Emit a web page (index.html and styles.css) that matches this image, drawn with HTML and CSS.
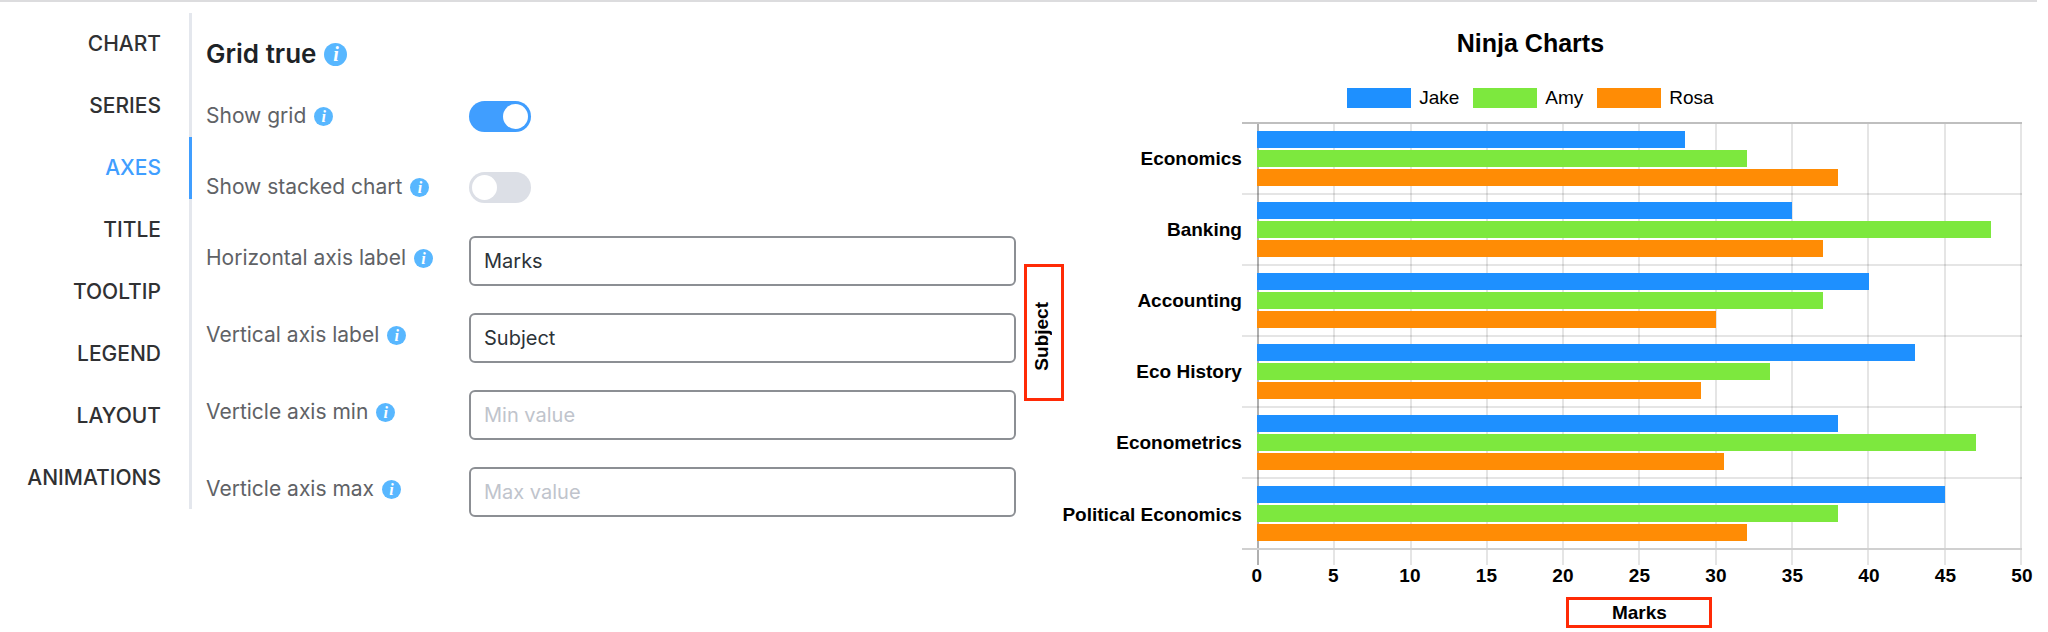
FILE: index.html
```html
<!DOCTYPE html>
<html lang="en">
<head>
    <meta charset="UTF-8">
    <meta name="viewport" content="width=device-width, initial-scale=1.0">
    <title>Ninja Charts</title>
    <link rel="stylesheet" href="styles.css">
</head>
<body>
    <main class="page">
        <nav class="tabs">
            <a href="#chart" class="tab">CHART</a>
            <a href="#series" class="tab">SERIES</a>
            <a href="#axes" class="tab active">AXES</a>
            <a href="#title" class="tab">TITLE</a>
            <a href="#tooltip" class="tab">TOOLTIP</a>
            <a href="#legend" class="tab">LEGEND</a>
            <a href="#layout" class="tab">LAYOUT</a>
            <a href="#animations" class="tab">ANIMATIONS</a>
        </nav>

        <form class="settings">
            <h2 class="settings-title">Grid true <span class="info info-large">i</span></h2>

            <div class="row">
                <label class="row-label" for="show-grid">Show grid <span class="info">i</span></label>
                <input class="switch" type="checkbox" id="show-grid" checked>
            </div>
            <div class="row">
                <label class="row-label" for="show-stacked">Show stacked chart <span class="info">i</span></label>
                <input class="switch" type="checkbox" id="show-stacked">
            </div>
            <div class="row">
                <label class="row-label" for="x-label">Horizontal axis label <span class="info">i</span></label>
                <input class="field" type="text" id="x-label" value="Marks">
            </div>
            <div class="row">
                <label class="row-label" for="y-label">Vertical axis label <span class="info">i</span></label>
                <input class="field" type="text" id="y-label" value="Subject">
            </div>
            <div class="row">
                <label class="row-label" for="y-min">Verticle axis min <span class="info">i</span></label>
                <input class="field" type="text" id="y-min" placeholder="Min value">
            </div>
            <div class="row">
                <label class="row-label" for="y-max">Verticle axis max <span class="info">i</span></label>
                <input class="field" type="text" id="y-max" placeholder="Max value">
            </div>
        </form>

        <section class="chart">
            <h3 class="chart-title">Ninja Charts</h3>
            <div class="legend">
                <span class="legend-item"><span class="swatch blue"></span>Jake</span>
                <span class="legend-item"><span class="swatch green"></span>Amy</span>
                <span class="legend-item"><span class="swatch orange"></span>Rosa</span>
            </div>

            <div class="chart-body">
                <div class="y-title"><span class="y-title-text">Subject</span></div>
                <div class="plot">
                    <div class="grid-lines">
                        <span></span><span></span><span></span><span></span><span></span>
                        <span></span><span></span><span></span><span></span><span></span>
                    </div>
                    <div class="group">
                        <span class="category">Economics</span>
                        <div class="bars">
                            <div class="bar blue" style="width: 56%"></div>
                            <div class="bar green" style="width: 64%"></div>
                            <div class="bar orange" style="width: 76%"></div>
                        </div>
                    </div>
                    <div class="group">
                        <span class="category">Banking</span>
                        <div class="bars">
                            <div class="bar blue" style="width: 70%"></div>
                            <div class="bar green" style="width: 96%"></div>
                            <div class="bar orange" style="width: 74%"></div>
                        </div>
                    </div>
                    <div class="group">
                        <span class="category">Accounting</span>
                        <div class="bars">
                            <div class="bar blue" style="width: 80%"></div>
                            <div class="bar green" style="width: 74%"></div>
                            <div class="bar orange" style="width: 60%"></div>
                        </div>
                    </div>
                    <div class="group">
                        <span class="category">Eco History</span>
                        <div class="bars">
                            <div class="bar blue" style="width: 86%"></div>
                            <div class="bar green" style="width: 67%"></div>
                            <div class="bar orange" style="width: 58%"></div>
                        </div>
                    </div>
                    <div class="group">
                        <span class="category">Econometrics</span>
                        <div class="bars">
                            <div class="bar blue" style="width: 76%"></div>
                            <div class="bar green" style="width: 94%"></div>
                            <div class="bar orange" style="width: 61%"></div>
                        </div>
                    </div>
                    <div class="group">
                        <span class="category">Political Economics</span>
                        <div class="bars">
                            <div class="bar blue" style="width: 90%"></div>
                            <div class="bar green" style="width: 76%"></div>
                            <div class="bar orange" style="width: 64%"></div>
                        </div>
                    </div>
                </div>
            </div>

            <div class="x-axis">
                <div class="ticks">
                    <span>0</span><span>5</span><span>10</span><span>15</span><span>20</span><span>25</span>
                    <span>30</span><span>35</span><span>40</span><span>45</span><span>50</span>
                </div>
                <div class="x-title">Marks</div>
            </div>
        </section>
    </main>
</body>
</html>
```
FILE: styles.css
```css
* {
    box-sizing: border-box;
}
body {
    margin: 0;
    background-color: #fff;
    font-family: Inter, "Liberation Sans", sans-serif;
    font-size: 21px;
    color: #2c3338;
}
.page {
    display: grid;
    grid-template-columns: 192px minmax(0, 4fr) minmax(0, 5fr);
    align-items: start;
}
.page::before {
    content: "";
    grid-column: 1 / -1;
    height: 2px;
    margin-right: 11px;
    background-color: #dcdcde;
}

/* Tabs */
.tabs {
    display: flex;
    flex-direction: column;
    margin-top: 11px;
}
.tab {
    height: 62px;
    padding-right: 28px;
    border-right: 3px solid #e4e7ed;
    line-height: 62px;
    text-align: right;
    text-decoration: none;
    font-weight: 500;
    color: #303133;
}
.tab.active {
    color: #409eff;
    border-right-color: #409eff;
}

/* Settings form */
.settings {
    padding: 27px 1px 0 14px;
}
.settings-title {
    display: flex;
    align-items: center;
    gap: 8px;
    margin: 0 0 12px;
    font-size: 26px;
    font-weight: 600;
    line-height: 50px;
    color: #1d2327;
}
.row {
    display: flex;
    align-items: flex-start;
    min-height: 53px;
    margin-bottom: 18px;
}
.row-label {
    display: flex;
    align-items: center;
    gap: 8px;
    flex: 0 0 263px;
    line-height: 50px;
    color: #606266;
}
.info {
    width: 19px;
    height: 19px;
    border-radius: 50%;
    background-color: #58b7ff;
    color: #fff;
    font: italic bold 16px/19px "Liberation Serif", serif;
    text-align: center;
}
.info-large {
    width: 23px;
    height: 23px;
    font-size: 20px;
    line-height: 23px;
}
.switch {
    appearance: none;
    width: 62px;
    height: 31px;
    margin: 10px 0;
    padding: 3px;
    border-radius: 16px;
    background-color: #dcdfe6;
    cursor: pointer;
}
.switch::before {
    content: "";
    display: block;
    width: 25px;
    height: 25px;
    border-radius: 50%;
    background-color: #fff;
}
.switch:checked {
    background-color: #409eff;
}
.switch:checked::before {
    margin-left: auto;
}
.field {
    flex: 1;
    min-width: 0;
    height: 50px;
    margin: 3px 0 6px;
    padding: 0 13px;
    border: 2px solid #8c8f94;
    border-radius: 6px;
    background-color: #fff;
    font: inherit;
    font-size: 20px;
    color: #2c3338;
}
.field::placeholder {
    color: #c0c4cc;
}

/* Chart */
.chart {
    padding: 23px 11px 0 7px;
    font-family: "Liberation Sans", Arial, sans-serif;
    font-size: 19px;
    color: #000;
}
.chart-title {
    margin: 0;
    font-size: 25px;
    line-height: 36px;
    text-align: center;
}
.legend {
    display: flex;
    justify-content: center;
    gap: 14px;
    margin: 27px 0 14px;
}
.legend-item {
    display: flex;
    align-items: center;
    gap: 8px;
    line-height: 20px;
}
.swatch {
    width: 64px;
    height: 20px;
}
.blue {
    background-color: #1e90ff;
}
.green {
    background-color: #7de83e;
}
.orange {
    background-color: #ff8c05;
}
.chart-body {
    display: flex;
    align-items: center;
    padding-right: 15px;
}
.y-title {
    display: flex;
    align-items: center;
    justify-content: center;
    flex: 0 0 40px;
    height: 137px;
    margin-bottom: 8px;
    padding: 8px 4px 0 0;
    border: 3px solid #ff2a06;
}
.y-title-text {
    writing-mode: vertical-rl;
    transform: rotate(180deg);
    font-weight: bold;
}
.plot {
    position: relative;
    flex: 1;
}
.grid-lines {
    position: absolute;
    top: 0;
    right: 0;
    bottom: -15px;
    left: 193px;
    display: grid;
    grid-template-columns: repeat(10, 1fr);
    border-right: 2px solid #e5e5e5;
}
.grid-lines span {
    border-left: 2px solid #e5e5e5;
}
.grid-lines span:first-child {
    border-left-color: #b0b0b0;
}
.group {
    display: flex;
    align-items: stretch;
}
.category {
    display: flex;
    align-items: center;
    justify-content: flex-end;
    flex: 0 0 178px;
    min-width: 0;
    padding-top: 2px;
    font-weight: bold;
    white-space: nowrap;
}
.bars {
    position: relative;
    flex: 1;
    display: flex;
    flex-direction: column;
    gap: 2px;
    padding: 7px 0 7px 15px;
    border-top: 2px solid rgba(0, 0, 0, 0.1);
}
.group:nth-child(2) .bars {
    border-top-color: #bfbfbf;
}
.group:last-child .bars {
    border-bottom: 2px solid #d0d0d0;
}
.bar {
    height: 17px;
}
.x-axis {
    padding: 14px 15px 0 233px;
}
.ticks {
    display: flex;
    justify-content: space-between;
    font-weight: bold;
    line-height: 24px;
}
.ticks span {
    display: flex;
    justify-content: center;
    width: 0;
}
.x-title {
    width: 146px;
    margin: 9px auto 0;
    border: 3px solid #ff2a06;
    font-weight: bold;
    line-height: 25px;
    text-align: center;
}
```
